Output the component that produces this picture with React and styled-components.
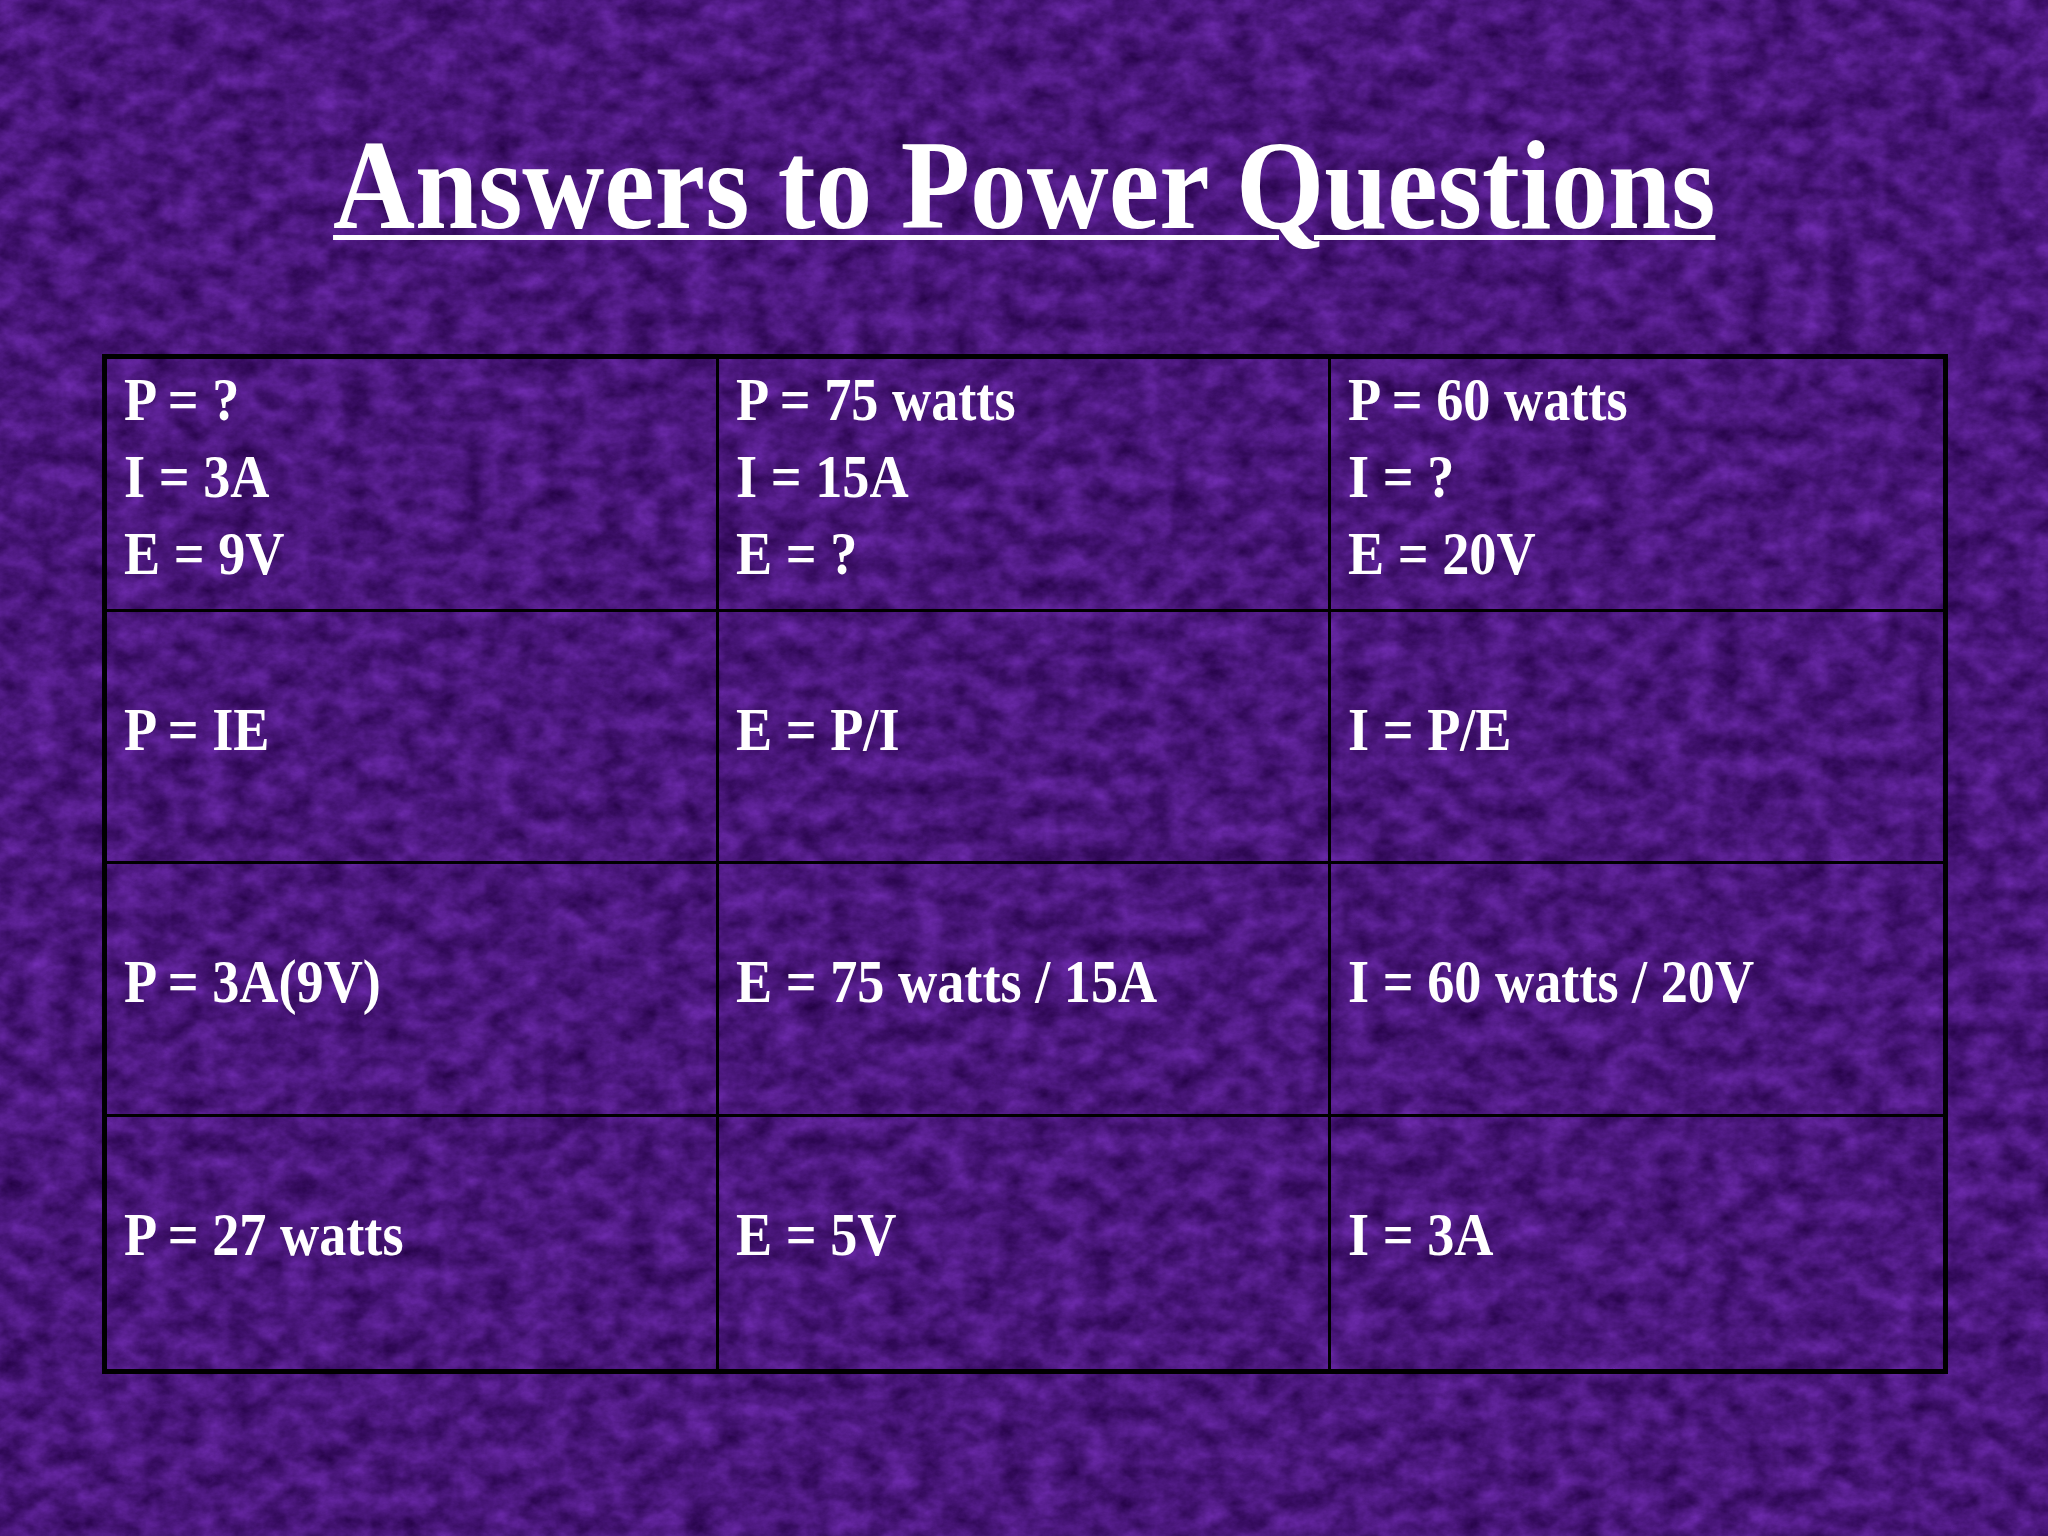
import React from "react";
import styled, { createGlobalStyle } from "styled-components";

const Global = createGlobalStyle`
  html, body { margin: 0; padding: 0; background: #46157c; }
  body { font-family: "Liberation Serif", "Times New Roman", serif; }
`;

const Slide = styled.div`
  position: relative;
  width: 2048px;
  height: 1536px;
  overflow: hidden;
  background: #46157c;
  display: flex;
  flex-direction: column;
`;

const Texture = styled.svg`
  position: absolute;
  inset: 0;
  width: 100%;
  height: 100%;
  z-index: 0;
`;

const Content = styled.div`
  position: relative;
  z-index: 1;
  display: flex;
  flex-direction: column;
  padding-top: 121px;
`;

const TitleRow = styled.div`
  text-align: center;
  line-height: 128px;
  height: 128px;
`;

const Title = styled.h1`
  display: inline-block;
  margin: 0;
  font-family: "Liberation Serif", "Times New Roman", serif;
  font-weight: 700;
  font-size: 128px;
  line-height: 128px;
  color: #ffffff;
  text-decoration: underline;
  text-decoration-thickness: 5px;
  text-underline-offset: 7px;
  transform: scaleX(0.887);
  transform-origin: center;
  white-space: nowrap;
`;

const Table = styled.div`
  margin: 105px 0 0 102px;
  width: 1846px;
  height: 1020px;
  box-sizing: border-box;
  border: 5px solid #000;
  display: grid;
  grid-template-columns: repeat(3, 1fr);
  grid-template-rows: repeat(4, 1fr);
`;

const Cell = styled.div`
  box-sizing: border-box;
  border-right: ${(p) => (p.$lastCol ? "none" : "3px solid #000")};
  border-bottom: ${(p) => (p.$lastRow ? "none" : "3px solid #000")};
  padding: 2px 0 0 17px;
  overflow: hidden;
`;

const Lines = styled.div`
  display: inline-block;
  transform: scaleX(0.875);
  transform-origin: left top;
  white-space: nowrap;
`;

const Line = styled.div`
  height: 77px;
  font-family: "Liberation Serif", "Times New Roman", serif;
  font-weight: 700;
  font-size: 62px;
  line-height: 77px;
  color: #ffffff;
`;

const rows = [
  [
    ["P = ?", "I = 3A", "E = 9V"],
    ["P = 75 watts", "I = 15A", "E = ?"],
    ["P = 60 watts", "I = ?", "E = 20V"],
  ],
  [["", "P = IE"], ["", "E = P/I"], ["", "I = P/E"]],
  [["", "P = 3A(9V)"], ["", "E = 75 watts / 15A"], ["", "I = 60 watts / 20V"]],
  [["", "P = 27 watts"], ["", "E = 5V"], ["", "I = 3A"]],
];

export default function App() {
  return (
    <>
      <Global />
      <Slide>
        <Texture xmlns="http://www.w3.org/2000/svg" preserveAspectRatio="none">
          <filter id="felt" x="0" y="0" width="100%" height="100%" colorInterpolationFilters="sRGB">
            <feTurbulence type="fractalNoise" baseFrequency="0.035 0.045" numOctaves="5" seed="11" result="n" />
            <feColorMatrix
              in="n"
              type="matrix"
              values="0.32 0 0 0 0.13  0.18 0 0 0 0.0  0.45 0 0 0 0.26  0 0 0 0 1"
            />
          </filter>
          <rect width="100%" height="100%" filter="url(#felt)" />
        </Texture>
        <Content>
          <TitleRow>
            <Title>Answers to Power Questions</Title>
          </TitleRow>
          <Table>
            {rows.map((row, ri) =>
              row.map((cell, ci) => (
                <Cell key={`${ri}-${ci}`} $lastCol={ci === 2} $lastRow={ri === 3}>
                  <Lines>
                    {cell.map((t, li) => (
                      <Line key={li}>{t || "\u00a0"}</Line>
                    ))}
                  </Lines>
                </Cell>
              ))
            )}
          </Table>
        </Content>
      </Slide>
    </>
  );
}
